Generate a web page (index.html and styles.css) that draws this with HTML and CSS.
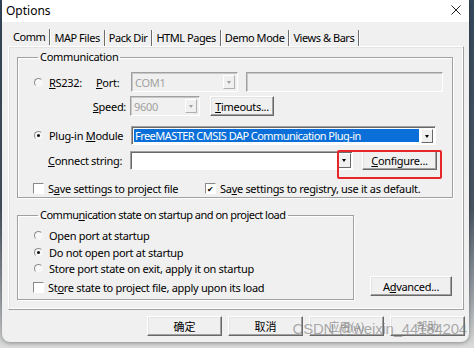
FILE: index.html
```html
<!DOCTYPE html>
<html lang="en">
<head>
    <meta charset="UTF-8">
    <title>Options</title>
    <link rel="stylesheet" href="styles.css">
</head>
<body>
    <div class="window">
        <div class="titlebar">
            <span class="title">Options</span>
            <svg class="close" width="10" height="10" viewBox="0 0 10 10"><path d="M0.5 0.5L9.5 9.5M9.5 0.5L0.5 9.5" stroke="#222" stroke-width="1"/></svg>
        </div>

        <div class="tabs">
            <span class="tab active">Comm</span>
            <span class="tab">MAP Files</span>
            <span class="tab">Pack Dir</span>
            <span class="tab">HTML Pages</span>
            <span class="tab">Demo Mode</span>
            <span class="tab">Views &amp; Bars</span>
        </div>

        <div class="panel">
            <fieldset class="group comm">
                <legend>Communication</legend>

                <div class="row r1">
                    <span class="radio"></span>
                    <span class="lbl lbl-rs"><u>R</u>S232:</span>
                    <span class="lbl lbl-port"><u>P</u>ort:</span>
                    <div class="combo disabled port"><span class="val">COM1</span><span class="arrow"></span></div>
                    <div class="edit disabled addr"></div>
                </div>

                <div class="row r2">
                    <span class="spacer"></span>
                    <span class="lbl lbl-speed"><u>S</u>peed:</span>
                    <div class="combo disabled speed"><span class="val">9600</span><span class="arrow"></span></div>
                    <button class="btn timeouts"><u>T</u>imeouts...</button>
                </div>

                <div class="row r3">
                    <span class="radio checked"></span>
                    <span class="lbl lbl-wide">Plug-in <u>M</u>odule</span>
                    <div class="combo selected plugin"><span class="val">FreeMASTER CMSIS DAP Communication Plug-in</span><span class="arrow"></span></div>
                </div>

                <div class="row r4">
                    <span class="spacer"></span>
                    <span class="lbl lbl-wide"><u>C</u>onnect string:</span>
                    <div class="edit connect"><span class="arrow small"></span></div>
                    <button class="btn configure"><u>C</u>onfigure...</button>
                    <span class="mark"></span>
                </div>

                <div class="row r5">
                    <span class="check"></span>
                    <span class="lbl save-file">S<u>a</u>ve settings to project file</span>
                    <span class="check checked">&#10004;</span>
                    <span class="lbl">Sa<u>v</u>e settings to registry, use it as default.</span>
                </div>
            </fieldset>

            <div class="lower">
                <fieldset class="group startup">
                    <legend>Commu<u>n</u>ication state on startup and on project load</legend>
                    <div class="opt o1"><span class="radio"></span><span class="lbl">Open port at startup</span></div>
                    <div class="opt o2"><span class="radio checked"></span><span class="lbl">Do not open port at startup</span></div>
                    <div class="opt o3"><span class="radio"></span><span class="lbl">Store port state on exit, apply it on startup</span></div>
                    <div class="opt o4"><span class="check"></span><span class="lbl">St<u>o</u>re state to project file, apply upon its load</span></div>
                </fieldset>
                <button class="btn advanced">A<u>d</u>vanced...</button>
            </div>
        </div>

        <div class="footer">
            <button class="btn cjk">确定</button>
            <button class="btn cjk">取消</button>
            <button class="btn cjk" disabled>应用(A)</button>
            <button class="btn cjk" disabled>帮助</button>
            <span class="watermark">CSDN @weixin_44184204</span>
        </div>
    </div>
</body>
</html>
```

FILE: styles.css
```css
body {
    margin: 0;
    width: 474px;
    height: 348px;
    overflow: hidden;
    background: linear-gradient(to bottom, #34495c 0%, #4a5563 60%, #9aa0a6 85%, #dcdcdc 100%);
    font-family: 'Noto Sans', 'Noto Sans CJK SC', sans-serif;
    font-size: 11px;
    letter-spacing: -0.3px;
    color: #000;
}
.window {
    width: 467px;
    height: 342px;
    margin-left: 2px;
    background: #f0f0f0;
    border-radius: 0 0 8px 8px;
    overflow: hidden;
    box-shadow: 0 1px 4px rgba(0, 0, 0, 0.35);
}
.titlebar {
    height: 22px;
    background: #ffffff;
    display: flex;
    align-items: center;
    justify-content: space-between;
    padding: 0 8px 2px 4px;
    box-sizing: border-box;
    font-size: 12px;
    letter-spacing: 0;
}
.tabs {
    display: flex;
    height: 18px;
    margin: 6px 0 0 7px;
    padding-top: 2px;
    box-sizing: border-box;
    align-items: center;
    letter-spacing: -0.45px;
}
.tab {
    padding: 0 4px;
    line-height: 16px;
    border-right: 1px solid #6d6d6d;
    box-shadow: 1px 0 0 #ffffff;
}
.tab.active {
    position: relative;
    top: -1px;
}
.panel {
    width: 456px;
    height: 264px;
    margin-left: 6px;
    box-sizing: border-box;
    border: 1px solid #a0a0a0;
    border-color: #ffffff #a0a0a0 #a0a0a0 #ffffff;
    box-shadow: inset 1px 1px 0 #e3e3e3, inset -1px -1px 0 #ffffff;
    padding: 2px 0 0 8px;
}
.group {
    margin: 0;
    min-width: 0;
    box-sizing: border-box;
    border: 1px solid #a0a0a0;
    box-shadow: inset 1px 1px 0 #ffffff, 1px 1px 0 #ffffff;
}
.group legend {
    margin-left: 5px;
    padding: 0 2px;
    line-height: 16px;
}
.comm {
    width: 436px;
    padding: 7px 0 2px 15px;
}
.row {
    display: flex;
    align-items: center;
    height: 20px;
    position: relative;
}
.r2 { margin-top: 4px; }
.r3 { margin-top: 10px; height: 19px; }
.r4 { margin-top: 5px; }
.r5 { margin-top: 11px; height: 14px; }
.spacer {
    width: 15px;
    flex: none;
}
.radio {
    width: 9px;
    height: 9px;
    flex: none;
    margin: 0 6px 0 1px;
    border-radius: 50%;
    border: 1px solid;
    border-color: #8c8c8c #f4f4f4 #f4f4f4 #8c8c8c;
    background: #f8f8f8;
    box-sizing: border-box;
    position: relative;
}
.radio.checked::after {
    content: "";
    position: absolute;
    left: 2px;
    top: 2px;
    width: 3px;
    height: 3px;
    border-radius: 50%;
    background: #111;
}
.check {
    width: 11px;
    height: 11px;
    flex: none;
    margin-right: 4px;
    box-sizing: border-box;
    border: 1px solid;
    border-color: #8a8a8a #ffffff #ffffff #8a8a8a;
    background: #ffffff;
    font-size: 8px;
    line-height: 9px;
    text-align: center;
    letter-spacing: 0;
}
.lbl { white-space: nowrap; }
.lbl-rs { width: 47px; flex: none; }
.lbl-port { width: 35px; flex: none; }
.lbl-speed { width: 78px; flex: none; text-align: right; padding-right: 4px; }
.lbl-wide { width: 82px; flex: none; }
.combo, .edit {
    height: 100%;
    box-sizing: border-box;
    border: 1px solid;
    border-color: #a0a0a0 #ffffff #ffffff #a0a0a0;
    box-shadow: inset 1px 1px 0 #696969;
    display: flex;
    align-items: center;
    flex: none;
    background: #ffffff;
}
.combo .val {
    flex: 1;
    padding-left: 3px;
    white-space: nowrap;
    overflow: hidden;
}
.combo.disabled, .edit.disabled {
    background: #f0f0f0;
    color: #a0a0a0;
    border-color: #a0a0a0 #ffffff #ffffff #a0a0a0;
    box-shadow: inset 1px 1px 0 #c8c8c8;
}
.arrow {
    width: 12px;
    height: 14px;
    flex: none;
    margin-right: 2px;
    background: #f0f0f0;
    border: 1px solid;
    border-color: #ffffff #6a6a6a #6a6a6a #ffffff;
    box-sizing: border-box;
    position: relative;
}
.arrow::after {
    content: "";
    position: absolute;
    left: 3px;
    top: 5px;
    border-left: 2.5px solid transparent;
    border-right: 2.5px solid transparent;
    border-top: 3px solid #000;
}
.disabled .arrow { border-color: #ffffff #b0b0b0 #b0b0b0 #ffffff; }
.disabled .arrow::after { border-top-color: #a0a0a0; }
.port { width: 107px; }
.addr { width: 197px; margin-left: 8px; }
.speed { width: 70px; }
.plugin { width: 305px; }
.combo.selected .val {
    background: #0a6fd8;
    color: #ffffff;
    margin: 2px 2px 2px 2px;
    line-height: 13px;
    padding-left: 1px;
    letter-spacing: -0.55px;
}
.connect {
    width: 223px;
    height: 19px;
    justify-content: flex-end;
}
.arrow.small {
    width: 13px;
    height: 15px;
    margin-right: 1px;
}
.btn {
    font-family: inherit;
    font-size: 11px;
    letter-spacing: inherit;
    color: #000;
    background: #f0f0f0;
    border: 1px solid;
    border-color: #ffffff #696969 #696969 #ffffff;
    box-shadow: inset -1px -1px 0 #a0a0a0, inset 1px 1px 0 #e3e3e3;
    padding: 0;
    height: 20px;
    flex: none;
}
.timeouts { width: 64px; margin-left: 10px; }
.configure { width: 75px; margin-left: 9px; }
.mark {
    position: absolute;
    left: 304px;
    top: 0;
    width: 105px;
    height: 29px;
    box-sizing: border-box;
    border: 2px solid #e8262a;
    border-radius: 2px;
}
.save-file { width: 142px; flex: none; }
.r5 .check.checked { margin-left: 15px; }
.lower {
    display: flex;
    align-items: flex-end;
    margin-top: 9px;
}
.startup {
    width: 337px;
    padding: 4px 0 4px 15px;
}
.startup legend {
    letter-spacing: -0.5px;
}
.opt {
    display: flex;
    align-items: center;
    height: 16px;
}
.o2 { margin-top: 1px; }
.o4 { margin-top: 3px; }
.advanced {
    width: 82px;
    margin: 0 0 4px 16px;
}
.footer {
    display: flex;
    justify-content: flex-end;
    gap: 6px;
    margin-top: 6px;
    padding-right: 4px;
    position: relative;
}
.footer .btn {
    width: 75px;
}
.cjk {
    font-family: 'Noto Sans CJK SC', sans-serif;
    font-size: 11px;
    letter-spacing: 0;
}
.btn:disabled {
    color: #a0a0a0;
}
.watermark {
    position: absolute;
    right: 2px;
    top: 4px;
    font-family: 'Liberation Sans', sans-serif;
    font-size: 15px;
    color: rgba(120, 120, 120, 0.6);
    letter-spacing: -0.2px;
    white-space: nowrap;
}
```
